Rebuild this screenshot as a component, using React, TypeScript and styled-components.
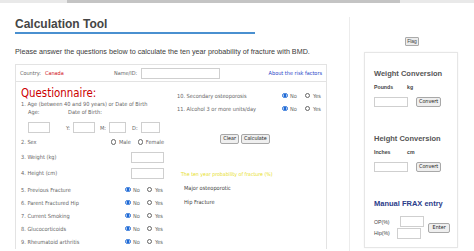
import * as React from 'react'
import styled, { createGlobalStyle } from 'styled-components'

const ARIAL = `"Liberation Sans", Arial, sans-serif`
const TAHOMA = `"DejaVu Sans Condensed", "DejaVu Sans", sans-serif`

const GlobalStyle = createGlobalStyle`
  html, body {
    margin: 0;
    padding: 0;
    background: #fff;
  }
  body {
    width: 474px;
    height: 251px;
    overflow: hidden;
    font-family: ${ARIAL};
  }
`

const TopStrip = styled.div`
  height: 3px;
  background: linear-gradient(to right, #e9e9e9 0, #e9e9e9 67px, #c4c4c4 67px, #c4c4c4 400px, #e9e9e9 400px);
`

const Page = styled.div`
  display: flex;
  align-items: flex-start;
  height: 248px;
  overflow: hidden;
`

const Main = styled.div`
  width: 312px;
  padding-left: 15px;
`

const Title = styled.h1`
  margin: 14px 0 0;
  width: 240px;
  padding-bottom: 1px;
  border-bottom: 2px solid #4a90d0;
  font-family: ${ARIAL};
  font-size: 12px;
  line-height: 14px;
  font-weight: bold;
  color: #454545;
`

const Intro = styled.p`
  margin: 13px 0 0;
  font-size: 7.2px;
  line-height: 9px;
  color: #3a3a3a;
`

const FormBox = styled.div`
  margin-top: 8px;
  border: 1px solid #e3e3e3;
  border-bottom: none;
  height: 184px;
  font-family: ${TAHOMA};
  color: #666;
`

const TopRow = styled.div`
  display: flex;
  align-items: center;
  height: 16px;
  padding: 0 4px;
  border-bottom: 1px solid #e3e3e3;
  font-size: 5.5px;
`

const Field = styled.span<{ $w?: number }>`
  display: flex;
  align-items: center;
  gap: 4px;
  width: ${p => (p.$w ? `${p.$w}px` : 'auto')};
`

const Red = styled.span`
  color: #d0101b;
`

const Link = styled.a`
  margin-left: auto;
  color: #2a46c8;
  text-decoration: none;
`

const TextInput = styled.input<{ $w: number; $h?: number }>`
  box-sizing: border-box;
  width: ${p => p.$w}px;
  height: ${p => p.$h ?? 11}px;
  margin: 0;
  padding: 0;
  border: 1px solid #cfcfcf;
  background: #fff;
`

const Columns = styled.div`
  display: grid;
  grid-template-columns: 145px 1fr;
  column-gap: 11px;
  padding: 0 5px;
`

const Column = styled.div`
  display: flex;
  flex-direction: column;
`

const Heading = styled.div`
  margin-top: 4px;
  font-size: 11.4px;
  line-height: 14px;
  color: #cc0000;
`

const Row = styled.div<{ $h: number; $mt?: number; $indent?: number }>`
  display: flex;
  align-items: center;
  height: ${p => p.$h}px;
  margin-top: ${p => p.$mt ?? 0}px;
  padding-left: ${p => p.$indent ?? 0}px;
  font-size: 5.6px;
  white-space: nowrap;
`

const Labeled = styled.span<{ $ml: number }>`
  display: flex;
  align-items: center;
  gap: 3px;
  margin-left: ${p => p.$ml}px;
`

const Small = styled.span<{ $w?: number }>`
  display: inline-block;
  width: ${p => (p.$w ? `${p.$w}px` : 'auto')};
`

const RadioWrap = styled.label`
  display: inline-flex;
  align-items: center;
  gap: 2.5px;
`

const Radio = styled.input`
  appearance: none;
  box-sizing: border-box;
  width: 5.5px;
  height: 5.5px;
  margin: 0;
  border: 0.7px solid #666;
  border-radius: 50%;
  background: #fff;

  &:checked {
    border: 0.8px solid #1f6ad6;
    background: radial-gradient(circle, #1f6ad6 0 1.3px, #fff 1.6px);
  }
`

const Options = styled.div<{ $gap: number; $end?: number }>`
  margin-left: auto;
  margin-right: ${p => p.$end ?? 0}px;
  display: flex;
  align-items: center;
  gap: ${p => p.$gap}px;
`

const Button = styled.button<{ $size?: number }>`
  box-sizing: border-box;
  height: 10px;
  margin: 0;
  padding: 0 2px;
  border: 0.8px solid #a8a8a8;
  border-radius: 2px;
  background: #efefef;
  font-family: ${TAHOMA};
  font-size: ${p => p.$size ?? 5.4}px;
  line-height: 1;
  color: #222;
`

const Buttons = styled.div`
  display: flex;
  justify-content: center;
  gap: 2px;
  margin-top: 19px;
  padding-right: 8px;
`

const Yellow = styled.div`
  margin-top: 24px;
  padding-left: 4px;
  height: 13px;
  line-height: 13px;
  font-size: 5.2px;
  color: #e6dd1a;
`

const Result = styled.div`
  height: 13px;
  line-height: 13px;
  padding-left: 7px;
  margin-top: 1px;
  font-size: 5.6px;
  color: #444;
`

const Sidebar = styled.aside`
  margin: 14px 0 0 22px;
  width: 124px;
  height: 234px;
  border-left: 1px solid #ececec;
  display: flex;
  flex-direction: column;
  align-items: flex-start;
`

const Flag = styled.button`
  align-self: center;
  margin: 20px 0 0 0;
  height: 9px;
  padding: 0 1px;
  border: 0.8px solid #aaa;
  border-radius: 1px;
  background: #ececec;
  font-family: ${ARIAL};
  font-size: 5px;
  line-height: 1;
  color: #444;
`

const Box = styled.div`
  box-sizing: border-box;
  margin: 6px 0 0 14px;
  width: 94px;
  height: 196px;
  padding: 16px 0 0 9px;
  border: 1px solid #e6e6e6;
  box-shadow: 0 0 2px rgba(0, 0, 0, 0.05);
`

const BoxTitle = styled.div<{ $mt?: number; $navy?: boolean }>`
  margin-top: ${p => p.$mt ?? 0}px;
  font-size: 7.5px;
  line-height: 9px;
  font-weight: bold;
  color: ${p => (p.$navy ? '#2b3c8a' : '#555')};
`

const Units = styled.div`
  display: flex;
  margin-top: 5px;
  height: 8px;
  line-height: 8px;
  font-size: 5.2px;
  font-weight: bold;
  color: #444;

  span:first-child {
    width: 33px;
  }
`

const ConvertRow = styled.div`
  display: flex;
  align-items: center;
  gap: 8px;
  margin-top: 6px;
`

const Manual = styled.div`
  display: grid;
  grid-template-columns: auto auto;
  align-items: center;
  column-gap: 2px;
  margin-top: 8px;
  width: 76px;
`

const ManualRows = styled.div`
  display: flex;
  flex-direction: column;
`

const ManualRow = styled.div<{ $gap: number }>`
  display: flex;
  align-items: center;
  gap: ${p => p.$gap}px;
  height: 11.5px;
  font-size: 5.2px;
  color: #444;
`

type RadioPairProps = { name: string; gap: number; end?: number }

const RadioPair: React.FC<RadioPairProps> = ({ name, gap, end }) => (
  <Options $gap={gap} $end={end}>
    <RadioWrap><Radio type='radio' name={name} defaultChecked />No</RadioWrap>
    <RadioWrap><Radio type='radio' name={name} />Yes</RadioWrap>
  </Options>
)

const leftRadios = [
  '5. Previous Fracture',
  '6. Parent Fractured Hip',
  '7. Current Smoking',
  '8. Glucocorticoids',
  '9. Rheumatoid arthritis',
]

const App: React.FC = () => (
  <>
    <GlobalStyle />
    <TopStrip />
    <Page>
      <Main>
        <Title>Calculation Tool</Title>
        <Intro>Please answer the questions below to calculate the ten year probability of fracture with BMD.</Intro>
        <FormBox>
          <TopRow>
            <Field $w={94}>Country: <Red>Canada</Red></Field>
            <Field>Name/ID: <TextInput $w={79} /></Field>
            <Link href='#'>About the risk factors</Link>
          </TopRow>
          <Columns>
            <Column>
              <Heading>Questionnaire:</Heading>
              <Row $h={8}>1. Age (between 40 and 90 years) or Date of Birth</Row>
              <Row $h={8} $indent={7}>
                <Small $w={40}>Age:</Small>
                <Small>Date of Birth:</Small>
              </Row>
              <Row $h={11} $mt={6} $indent={7}>
                <TextInput $w={22} />
                <Labeled $ml={16}>Y: <TextInput $w={22} /></Labeled>
                <Labeled $ml={5}>M: <TextInput $w={17} /></Labeled>
                <Labeled $ml={6}>D: <TextInput $w={19} /></Labeled>
              </Row>
              <Row $h={12} $mt={3}>
                2. Sex
                <Options $gap={7} $end={2}>
                  <RadioWrap><Radio type='radio' name='sex' />Male</RadioWrap>
                  <RadioWrap><Radio type='radio' name='sex' />Female</RadioWrap>
                </Options>
              </Row>
              <Row $h={12} $mt={3}>
                3. Weight (kg)
                <Options $gap={0} $end={2}><TextInput $w={33} /></Options>
              </Row>
              <Row $h={12} $mt={4}>
                4. Height (cm)
                <Options $gap={0} $end={2}><TextInput $w={33} /></Options>
              </Row>
              <Row $h={13} $mt={4}>
                {leftRadios[0]}
                <RadioPair name='q5' gap={7} end={3} />
              </Row>
              {leftRadios.slice(1).map((label, i) => (
                <Row key={label} $h={13}>
                  {label}
                  <RadioPair name={`q${i + 6}`} gap={7} end={3} />
                </Row>
              ))}
            </Column>
            <Column>
              <Row $h={13} $mt={7}>
                10. Secondary osteoporosis
                <RadioPair name='q10' gap={8} />
              </Row>
              <Row $h={13}>
                11. Alcohol 3 or more units/day
                <RadioPair name='q11' gap={8} />
              </Row>
              <Buttons>
                <Button>Clear</Button>
                <Button>Calculate</Button>
              </Buttons>
              <Yellow>The ten year probability of fracture (%)</Yellow>
              <Result>Major osteoporotic</Result>
              <Result>Hip Fracture</Result>
            </Column>
          </Columns>
        </FormBox>
      </Main>
      <Sidebar>
        <Flag>Flag</Flag>
        <Box>
          <BoxTitle>Weight Conversion</BoxTitle>
          <Units><span>Pounds</span><span>kg</span></Units>
          <ConvertRow>
            <TextInput $w={34} $h={10} />
            <Button $size={5.4}>Convert</Button>
          </ConvertRow>
          <BoxTitle $mt={27}>Height Conversion</BoxTitle>
          <Units><span>Inches</span><span>cm</span></Units>
          <ConvertRow>
            <TextInput $w={34} $h={10} />
            <Button $size={5.4}>Convert</Button>
          </ConvertRow>
          <BoxTitle $mt={27} $navy>Manual FRAX entry</BoxTitle>
          <Manual>
            <ManualRows>
              <ManualRow $gap={10}>OP(%)<TextInput $w={24} /></ManualRow>
              <ManualRow $gap={7}>Hip(%)<TextInput $w={24} /></ManualRow>
            </ManualRows>
            <Button>Enter</Button>
          </Manual>
        </Box>
      </Sidebar>
    </Page>
  </>
)

export default App
